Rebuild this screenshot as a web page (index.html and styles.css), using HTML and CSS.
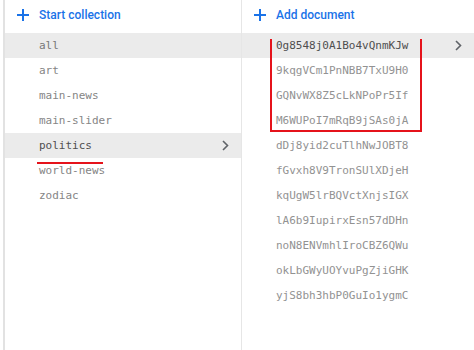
FILE: index.html
```html
<!DOCTYPE html>
<html>
<head>
<meta charset="utf-8">
<link rel="stylesheet" href="styles.css">
</head>
<body>
<div class="frame">
  <div class="panel panel-left">
    <div class="head">
      <svg class="plus" width="12" height="12" viewBox="0 0 12 12"><path d="M6 0v12M0 6h12" stroke="#1a73e8" stroke-width="2"/></svg>
      <span class="head-label">Start collection</span>
    </div>
    <ul class="list">
      <li class="row row-hl">all</li>
      <li class="row">art</li>
      <li class="row">main-news</li>
      <li class="row">main-slider</li>
      <li class="row row-hl row-sel"><span class="underlined">politics</span><svg class="chev" width="7" height="11" viewBox="0 0 7 11"><path d="M1 1l4.5 4.5L1 10" fill="none" stroke="#5f6368" stroke-width="1.6"/></svg></li>
      <li class="row">world-news</li>
      <li class="row">zodiac</li>
    </ul>
  </div>
  <div class="panel panel-right">
    <div class="head">
      <svg class="plus" width="12" height="12" viewBox="0 0 12 12"><path d="M6 0v12M0 6h12" stroke="#1a73e8" stroke-width="2"/></svg>
      <span class="head-label">Add document</span>
    </div>
    <ul class="list docs">
      <li class="row row-hl row-sel">0g8548j0A1Bo4vQnmKJw<svg class="chev" width="7" height="11" viewBox="0 0 7 11"><path d="M1 1l4.5 4.5L1 10" fill="none" stroke="#5f6368" stroke-width="1.6"/></svg></li>
      <li class="row">9kqgVCm1PnNBB7TxU9H0</li>
      <li class="row">GQNvWX8Z5cLkNPoPr5If</li>
      <li class="row">M6WUPoI7mRqB9jSAs0jA</li>
      <li class="row">dDj8yid2cuTlhNwJOBT8</li>
      <li class="row">fGvxh8V9TronSUlXDjeH</li>
      <li class="row">kqUgW5lrBQVctXnjsIGX</li>
      <li class="row">lA6b9IupirxEsn57dDHn</li>
      <li class="row">noN8ENVmhlIroCBZ6QWu</li>
      <li class="row">okLbGWyUOYvuPgZjiGHK</li>
      <li class="row">yjS8bh3hbP0GuIo1ygmC</li>
    </ul>
    <div class="red-box"></div>
  </div>
</div>
</body>
</html>
```
FILE: styles.css
```css
html, body {
  margin: 0;
  padding: 0;
  background: #ffffff;
}
body {
  width: 474px;
  height: 350px;
  overflow: hidden;
}
.frame {
  display: flex;
  height: 350px;
  margin-left: 3px;
  border-left: 2px solid #e2e2e2;
}
.panel {
  position: relative;
  display: flex;
  flex-direction: column;
}
.panel-left {
  width: 236px;
  border-right: 1px solid #e6e6e6;
}
.panel-right {
  flex: 1;
}
.head {
  height: 33px;
  display: flex;
  align-items: center;
  padding-left: 12px;
  padding-bottom: 3px;
  box-sizing: border-box;
}
.plus {
  display: block;
}
.head-label {
  margin-left: 10px;
  font-family: Roboto, "Liberation Sans", sans-serif;
  font-weight: 500;
  font-size: 12px;
  color: #1a73e8;
}
.list {
  list-style: none;
  margin: 0;
  padding: 0;
}
.row {
  position: relative;
  height: 25px;
  display: flex;
  align-items: center;
  padding-left: 34px;
  font-family: "DejaVu Sans Mono", "Liberation Mono", monospace;
  font-size: 11px;
  color: #858585;
}
.docs .row {
  color: #929292;
}
.row-hl {
  background: #ebebeb;
  color: #787878;
}
.docs .row-sel,
.row-sel {
  color: #4f4f4f;
}
.chev {
  position: absolute;
  right: 12px;
  top: 7px;
}
.underlined {
  position: relative;
}
.underlined::after {
  content: "";
  position: absolute;
  left: -2px;
  right: -11px;
  top: 23px;
  height: 2px;
  background: #e5131b;
}
.red-box {
  position: absolute;
  left: 28px;
  top: 39px;
  width: 148px;
  height: 91px;
  border: 2px solid #e5131b;
  border-top: none;
}
```
